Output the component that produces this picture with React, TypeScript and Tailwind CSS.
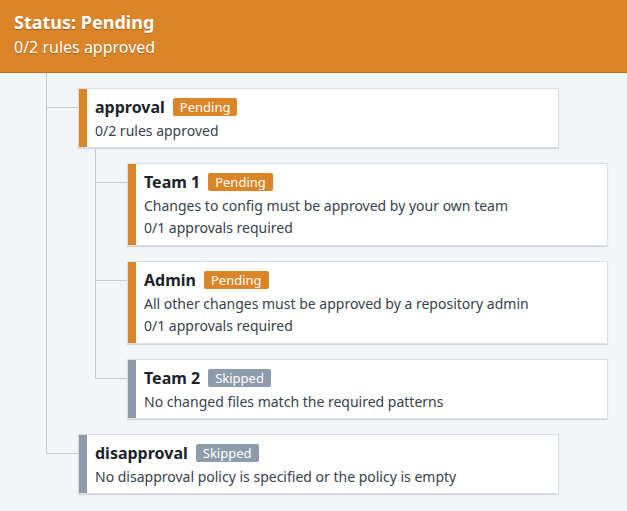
import React from 'react';

type Status = 'pending' | 'skipped';

interface Rule {
  title: string;
  status: Status;
  lines: string[];
  children?: Rule[];
}

const tree: Rule[] = [
  {
    title: 'approval',
    status: 'pending',
    lines: ['0/2 rules approved'],
    children: [
      {
        title: 'Team 1',
        status: 'pending',
        lines: ['Changes to config must be approved by your own team', '0/1 approvals required'],
      },
      {
        title: 'Admin',
        status: 'pending',
        lines: ['All other changes must be approved by a repository admin', '0/1 approvals required'],
      },
      {
        title: 'Team 2',
        status: 'skipped',
        lines: ['No changed files match the required patterns'],
      },
    ],
  },
  {
    title: 'disapproval',
    status: 'skipped',
    lines: ['No disapproval policy is specified or the policy is empty'],
  },
];

// Bar + badge colours per status
const statusConfig: Record<Status, { label: string; color: string }> = {
  pending: { label: 'Pending', color: 'bg-[#dc8428]' },
  skipped: { label: 'Skipped', color: 'bg-[#8c9cab]' },
};

function Card({ rule }: { rule: Rule }) {
  const cfg = statusConfig[rule.status];
  return (
    <div className="flex w-[481px] bg-white border border-[#dce0e4] shadow-[0_1px_1px_rgba(0,0,0,0.12)]">
      <div className={`w-2 shrink-0 ${cfg.color}`} />
      <div className={`pl-2 pt-[5px] ${rule.lines.length > 1 ? 'pb-[6px]' : 'pb-[5px]'}`}>
        <div className="flex items-center h-[26px] gap-2">
          <span className="text-[16px] font-bold text-[#1d232a]">{rule.title}</span>
          <span className={`px-[7px] h-[18px] leading-[18px] rounded-[2px] text-[13px] text-white ${cfg.color}`}>
            {cfg.label}
          </span>
        </div>
        {rule.lines.map((line) => (
          <div key={line} className="text-[14px] leading-[22px] text-[#38424c]">
            {line}
          </div>
        ))}
      </div>
    </div>
  );
}

function Branch({ rule, last }: { rule: Rule; last: boolean }) {
  return (
    <div className="flex">
      {/* connector: elbow, then the trunk for following siblings */}
      <div className="w-[32px] shrink-0 flex flex-col">
        <div className="h-[35px] border-l border-b border-[#c4cdd6]" />
        {!last && <div className="flex-1 border-l border-[#c4cdd6]" />}
      </div>
      <div className="pt-[15px]">
        <Card rule={rule} />
        {rule.children && (
          <div className="ml-[17px]">
            {rule.children.map((child, i) => (
              <Branch key={child.title} rule={child} last={i === rule.children!.length - 1} />
            ))}
          </div>
        )}
      </div>
    </div>
  );
}

export default function App() {
  return (
    <div className="min-h-screen bg-[#f3f6f9] font-['Noto_Sans',sans-serif]">
      <div className="h-[73px] bg-[#dc8428] border-b border-[#c27021] px-[14px] pt-[9px] text-white [text-shadow:0_1px_1px_rgba(0,0,0,0.25)]">
        <div className="text-[18px] font-bold leading-[26px]">Status: Pending</div>
        <div className="text-[16px] leading-[24px]">0/2 rules approved</div>
      </div>
      <div className="pl-[46px]">
        {tree.map((rule, i) => (
          <Branch key={rule.title} rule={rule} last={i === tree.length - 1} />
        ))}
      </div>
    </div>
  );
}
